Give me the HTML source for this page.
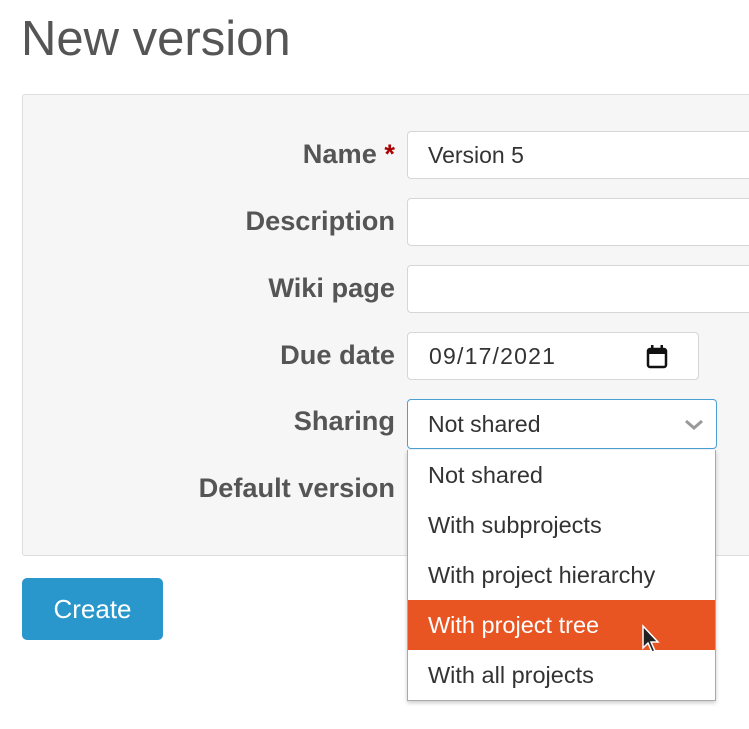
<!DOCTYPE html>
<html><head><style>
body{margin:0;width:749px;height:729px;overflow:hidden;background:#fff;font-family:"Liberation Sans",sans-serif;position:relative}
.a{position:absolute}
h1{position:absolute;left:21px;top:11px;margin:0;font-weight:normal;font-size:49px;color:#555}
.panel{left:22px;top:94px;width:760px;height:460px;background:#f6f6f6;border:1px solid #ddd;border-radius:3px}
.lbl{right:354px;font-weight:bold;font-size:27.2px;color:#555;text-align:right}
.in{left:407px;height:48px;background:#fff;border:1px solid #d6d6d6;border-radius:4px;box-sizing:border-box;font-size:23px;color:#333;line-height:46px;padding-left:20px}
.opt{position:absolute;left:0;width:100%;height:50px;line-height:50px;padding-left:20px;box-sizing:border-box;font-size:23.5px;color:#333}
</style></head><body>
<h1>New version</h1>
<div class="a panel"></div>
<div class="a lbl" style="top:138px">Name <span style="color:#a00">*</span></div>
<div class="a lbl" style="top:205px">Description</div>
<div class="a lbl" style="top:272px">Wiki page</div>
<div class="a lbl" style="top:339px">Due date</div>
<div class="a lbl" style="top:405px">Sharing</div>
<div class="a lbl" style="top:472px">Default version</div>
<div class="a in" style="top:131px;width:360px">Version 5</div>
<div class="a in" style="top:198px;width:360px"></div>
<div class="a in" style="top:265px;width:360px"></div>
<div class="a in" style="top:332px;width:292px;letter-spacing:1.2px;padding-left:21px">09/17/2021
<svg class="a" style="left:237px;top:11px" width="24" height="26" viewBox="0 0 24 26"><rect x="3" y="5" width="18" height="18" rx="2" fill="none" stroke="#111" stroke-width="2.5"/><rect x="3" y="5" width="18" height="5" fill="#111"/><rect x="6" y="1" width="2.5" height="5" fill="#111"/><rect x="15.5" y="1" width="2.5" height="5" fill="#111"/></svg></div>
<div class="a in" style="top:399px;width:310px;height:50px;border-color:#4a9fd5;line-height:48px">Not shared
<svg class="a" style="left:276px;top:19px" width="20" height="12"><path d="M2 2 L10 9 L18 2" fill="none" stroke="#999" stroke-width="3"/></svg></div>
<div class="a" style="left:407px;top:450px;width:309px;height:251px;background:#fff;border:1px solid #aaa;border-top:none;box-sizing:border-box;box-shadow:0 2px 4px rgba(0,0,0,.2)">
<div class="opt" style="top:0">Not shared</div>
<div class="opt" style="top:50px">With subprojects</div>
<div class="opt" style="top:100px">With project hierarchy</div>
<div class="opt" style="top:150px;background:#e85522;color:#fff">With project tree</div>
<div class="opt" style="top:200px">With all projects</div>
</div>
<svg class="a" style="left:641px;top:624px" width="22" height="32"><path d="M2 2 L2 24 L7 19 L11 28 L14 27 L10 18 L17 18 Z" fill="#222" stroke="#fff" stroke-width="1.5"/></svg>
<div class="a" style="left:22px;top:578px;width:141px;height:62px;background:#2996cc;border-radius:5px;color:#fff;font-size:26px;line-height:62px;text-align:center">Create</div>
</body></html>
